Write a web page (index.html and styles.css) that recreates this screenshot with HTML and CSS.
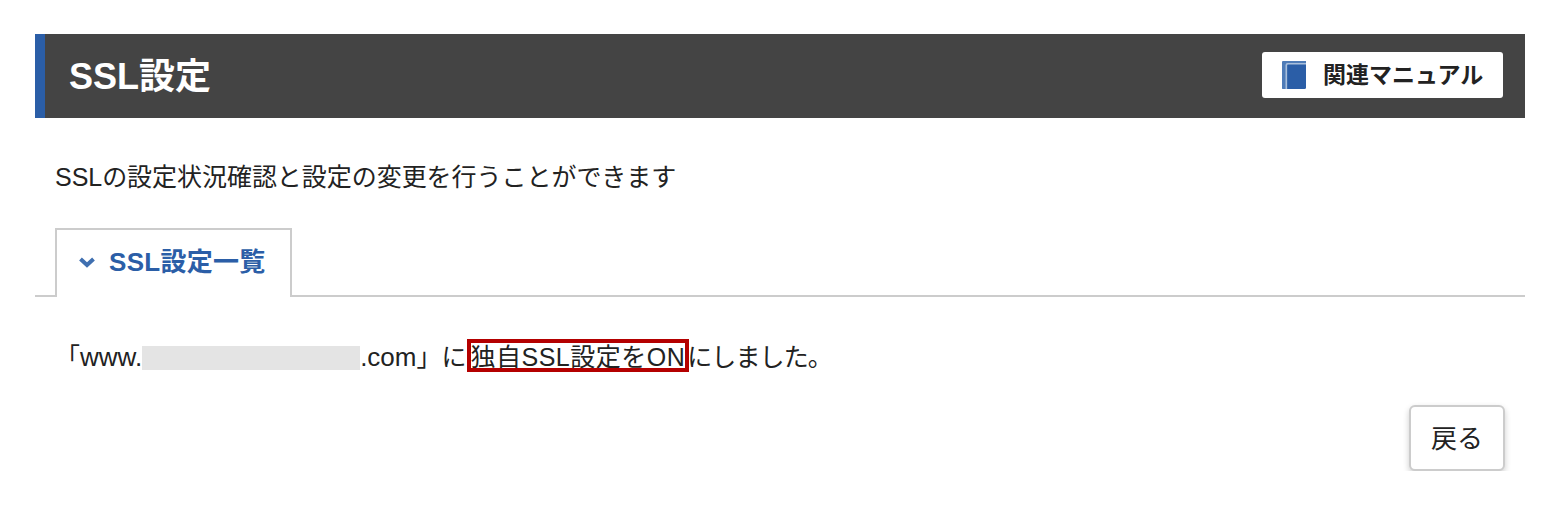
FILE: index.html
```html
<!doctype html>
<html lang="ja">
  <head>
    <meta charset="utf-8">
    <title>SSL設定</title>
    <link rel="stylesheet" href="styles.css">
  </head>
  <body>
    <div class="page">
      <div class="header">
        <h1 class="title">SSL設定</h1>
        <a class="manual" href="#">
          <svg class="manual-icon" width="24" height="28" viewBox="0 0 24 28">
            <rect width="24" height="28" rx="1.5" fill="#2b5ea7"/>
            <path d="M0 1.500A1.500 1.500 0 0 1 1.500 0H24V3H5.500V28H1.500A1.500 1.500 0 0 1 0 26.500Z" fill="#4f7cb8"/>
            <path d="M3.500 28V4A2 2 0 0 1 5.500 2H24V3.500H6A1 1 0 0 0 5 4.500V28Z" fill="#a9bfdc"/>
          </svg>
          <span class="manual-text">関連マニュアル</span>
        </a>
      </div>

      <p class="lead">SSLの設定状況確認と設定の変更を行うことができます</p>

      <div class="tabs">
        <div class="tab">
          <svg class="tab-icon" width="16" height="11" viewBox="0 0 16 11">
            <path d="M1.500 2L8 8L14.500 2" fill="none" stroke="#3f6fb0" stroke-width="4"/>
          </svg>
          <span class="tab-text">SSL設定一覧</span>
        </div>
      </div>

      <p class="message">「<span class="latin">www.</span><span class="blur"></span><span class="latin">.com</span>」に<span class="mark">独自SSL設定をON</span><span class="tail">にしました。</span></p>

      <div class="actions">
        <button class="back">戻る</button>
      </div>
    </div>
  </body>
</html>
```

FILE: styles.css
```css
* {
  box-sizing: border-box;
}
body {
  margin: 0;
  background: #fff;
  color: #222;
  font-family: "Liberation Sans", "Noto Sans CJK JP", sans-serif;
}
.page {
  padding: 34px 39px 0 35px;
}
.header {
  display: flex;
  align-items: center;
  justify-content: space-between;
  height: 84px;
  padding: 0 22px 2px 24px;
  background: #444;
  border-left: 10px solid #2b5ea7;
}
.title {
  margin: 0;
  padding-bottom: 4px;
  color: #fff;
  font-size: 36px;
  font-weight: bold;
}
.manual {
  display: flex;
  align-items: center;
  gap: 17px;
  width: 241px;
  height: 46px;
  padding-left: 20px;
  background: #fff;
  border-radius: 3px;
  color: #222;
  font-size: 23px;
  font-weight: bold;
  text-decoration: none;
}
.manual-text {
  padding-bottom: 4px;
}
.lead {
  margin: 0;
  padding: 43px 0 0 20px;
  font-size: 25px;
  line-height: 32px;
  letter-spacing: -0.04px;
}
.tabs {
  display: flex;
  height: 69px;
  margin-top: 35px;
  padding-left: 20px;
  border-bottom: 2px solid #ccc;
}
.tab {
  display: flex;
  align-items: center;
  gap: 14px;
  width: 237px;
  height: 69px;
  padding: 0 0 2px 22px;
  background: #fff;
  border: 2px solid #ccc;
  border-bottom: none;
  color: #2b5ea7;
  font-size: 26px;
  font-weight: bold;
}
.tab-text {
  padding-bottom: 6px;
  letter-spacing: 0.3px;
}
.message {
  margin: 0;
  padding: 44px 0 0 20px;
  font-size: 25px;
  line-height: 32px;
}
.latin {
  font-size: 26px;
}
.blur {
  display: inline-block;
  width: 218px;
  height: 24px;
  background: #e4e4e4;
  vertical-align: -4px;
}
.mark {
  display: inline-block;
  height: 25px;
  padding-top: 3px;
  line-height: 22px;
  margin: 0 2px 0 4px;
  letter-spacing: 0.5px;
  outline: 4px solid #b40000;
}
.tail {
  letter-spacing: -0.9px;
}
.actions {
  display: flex;
  justify-content: flex-end;
  padding-top: 32px;
  margin-right: 20px;
}
.back {
  width: 96px;
  height: 66px;
  padding-bottom: 4px;
  background: #fff;
  border: 2px solid #ccc;
  border-radius: 6px;
  box-shadow: 0 3px 6px rgba(0, 0, 0, 0.2);
  color: #222;
  font-family: inherit;
  font-size: 26px;
}
```
